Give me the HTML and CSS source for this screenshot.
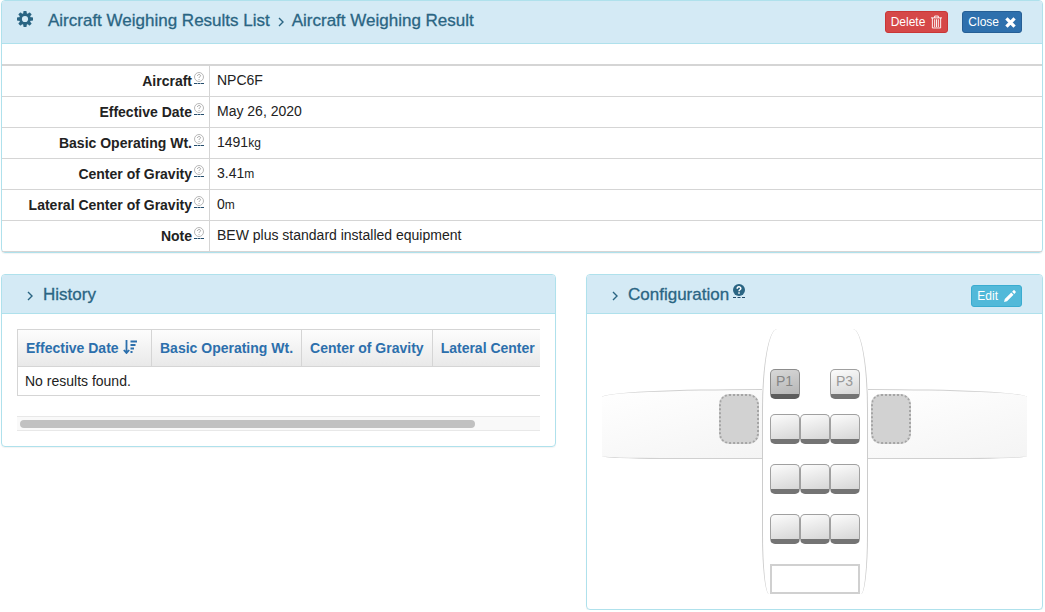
FILE: index.html
```
<!DOCTYPE html>
<html lang="en">
<head>
  <meta charset="UTF-8" />
  <meta name="viewport" content="width=device-width, initial-scale=1.0" />
  <title>Aircraft Weighing Result</title>
  <link rel="stylesheet" href="styles.css">
</head>
<body>
  <svg class="sprite" aria-hidden="true">
    <symbol id="help" viewBox="0 0 10 10">
      <circle cx="5" cy="5" r="4.5" fill="none" stroke="#b0b0b0" stroke-width="0.9" />
      <path d="M3.5 4c0-2 3-2 3-.2 0 1-1.5 1-1.5 2.1M5 7v.9" fill="none" stroke="#999" stroke-width="0.9" />
    </symbol>
    <symbol id="angle" viewBox="0 0 6 10">
      <path d="M1 1l4 4-4 4" fill="none" stroke="currentColor" stroke-width="1.4" />
    </symbol>
  </svg>

  <section class="panel">
    <header class="panel-heading">
      <svg class="gear" viewBox="0 0 16 16">
        <g fill="currentColor">
          <rect x="6.3" y="0" width="3.4" height="16" rx="0.8" />
          <rect x="6.3" y="0" width="3.4" height="16" rx="0.8" transform="rotate(45 8 8)" />
          <rect x="6.3" y="0" width="3.4" height="16" rx="0.8" transform="rotate(90 8 8)" />
          <rect x="6.3" y="0" width="3.4" height="16" rx="0.8" transform="rotate(135 8 8)" />
          <circle cx="8" cy="8" r="5.9" />
        </g>
        <circle cx="8" cy="8" r="3.1" fill="#d4eaf5" />
      </svg>
      <h1 class="title breadcrumb">
        <a href="#">Aircraft Weighing Results List</a>
        <svg class="angle"><use href="#angle" /></svg>
        <span>Aircraft Weighing Result</span>
      </h1>
      <div class="actions">
        <button type="button" class="btn btn-danger">Delete
          <svg class="icon-trash" viewBox="0 0 12 14" fill="none" stroke="currentColor">
            <path d="M0 2.5h12M4 2.5V.5h4v2M1.5 2.5v11h9v-11M4 4v8.500M6 4v8.500M8 4v8.500" />
          </svg>
        </button>
        <button type="button" class="btn btn-primary">Close
          <svg class="icon-x" viewBox="0 0 10 10">
            <path d="M1.300 1.300l7.400 7.400M8.700 1.300L1.300 8.700" stroke="currentColor" stroke-width="3" />
          </svg>
        </button>
      </div>
    </header>
    <table class="details">
      <tr>
        <th scope="row">Aircraft<span class="help"><svg><use href="#help" /></svg></span></th>
        <td>NPC6F</td>
      </tr>
      <tr>
        <th scope="row">Effective Date<span class="help"><svg><use href="#help" /></svg></span></th>
        <td>May 26, 2020</td>
      </tr>
      <tr>
        <th scope="row">Basic Operating Wt.<span class="help"><svg><use href="#help" /></svg></span></th>
        <td>1491<small>kg</small></td>
      </tr>
      <tr>
        <th scope="row">Center of Gravity<span class="help"><svg><use href="#help" /></svg></span></th>
        <td>3.41<small>m</small></td>
      </tr>
      <tr>
        <th scope="row">Lateral Center of Gravity<span class="help"><svg><use href="#help" /></svg></span></th>
        <td>0<small>m</small></td>
      </tr>
      <tr>
        <th scope="row">Note<span class="help"><svg><use href="#help" /></svg></span></th>
        <td>BEW plus standard installed equipment</td>
      </tr>
    </table>
  </section>

  <div class="columns">
    <section class="panel">
      <header class="panel-heading compact">
        <svg class="angle"><use href="#angle" /></svg>
        <h2 class="title">History</h2>
      </header>
      <div class="panel-body">
        <div class="table-scroll">
          <table class="history">
            <thead>
              <tr>
                <th class="sorted"><a href="#">Effective Date
                  <svg class="sort" viewBox="0 0 15 14">
                    <path d="M3.500 0v12M.8 10l2.700 3 2.700-3" fill="none" stroke="currentColor" stroke-width="1.800" />
                    <path d="M7.500 1.500H14M7.500 5h5M7.500 8.500h3.500M7.500 12h2" stroke="currentColor" stroke-width="2" />
                  </svg></a></th>
                <th><a href="#">Basic Operating Wt.</a></th>
                <th><a href="#">Center of Gravity</a></th>
                <th class="lateral"><a href="#">Lateral Center</a></th>
              </tr>
            </thead>
            <tbody>
              <tr><td colspan="4">No results found.</td></tr>
            </tbody>
          </table>
        </div>
        <div class="scroll-track"><div class="scroll-thumb"></div></div>
      </div>
    </section>

    <section class="panel">
      <header class="panel-heading compact">
        <svg class="angle"><use href="#angle" /></svg>
        <h2 class="title">Configuration<span class="help help-solid">
          <svg viewBox="0 0 12 12">
            <circle cx="6" cy="6" r="6" fill="currentColor" />
            <path d="M4.200 4.700c0-2.500 3.600-2.400 3.600-.2C7.800 5.800 6 5.700 6 7.200M6 8.200v1.500" fill="none" stroke="#fff" stroke-width="1.500" />
          </svg></span></h2>
        <div class="actions">
          <button type="button" class="btn btn-info">Edit
            <svg class="icon-pencil" viewBox="0 0 12 12" fill="currentColor">
              <path d="M0 12l.8-3 6.500-6.500 2.200 2.200L3 11.200zM8.100 1.700L9.400.4c.4-.4.8-.4 1.200 0l1 1c.4.4.4.8 0 1.200l-1.300 1.300z" />
            </svg>
          </button>
        </div>
      </header>
      <div class="panel-body">
        <div class="plane">
          <div class="wing wing-left"><div class="tank"></div></div>
          <div class="fuselage">
            <div class="seat-row cockpit">
              <div class="seat pilot">P1</div>
              <div class="seat">P3</div>
            </div>
            <div class="seat-row"><div class="seat"></div><div class="seat"></div><div class="seat"></div></div>
            <div class="seat-row"><div class="seat"></div><div class="seat"></div><div class="seat"></div></div>
            <div class="seat-row"><div class="seat"></div><div class="seat"></div><div class="seat"></div></div>
            <div class="baggage"></div>
          </div>
          <div class="wing wing-right"><div class="tank"></div></div>
        </div>
      </div>
    </section>
  </div>
</body>
</html>
```
FILE: styles.css
```
* {
  box-sizing: border-box;
}

body {
  margin: 0;
  padding: 0 2px 0 1px;
  font-family: "Liberation Sans", Arial, sans-serif;
  font-size: 14px;
  line-height: 20px;
  color: #222;
  background: #fff;
}

a {
  color: inherit;
  text-decoration: none;
}

.sprite {
  display: none;
}

/* panels */
.panel {
  border: 1px solid #afe1ec;
  border-radius: 4px;
  box-shadow: 0 1px 1px rgba(0, 0, 0, 0.05);
}

.panel-heading {
  display: flex;
  align-items: flex-start;
  padding: 10px 20px 10px 15px;
  color: #2a6583;
  background: #d4eaf5;
  border-bottom: 1px solid #afe1ec;
  border-radius: 3px 3px 0 0;
}

.panel-heading.compact {
  min-height: 39px;
  padding: 10px 20px 6px 25px;
}

.panel-body {
  padding: 15px;
}

.title {
  margin: 0;
  font-size: 17px;
  font-weight: normal;
  line-height: 20px;
  -webkit-text-stroke: 0.3px currentColor;
}

.breadcrumb {
  display: flex;
}

.gear {
  width: 16px;
  height: 16px;
  margin-right: 15px;
}

.angle {
  width: 6px;
  height: 10px;
  margin: 6px 10px 0 0;
}

.breadcrumb .angle {
  margin: 6px 8px 0;
}

.actions {
  display: flex;
  gap: 14px;
  margin-left: auto;
}

.btn {
  display: flex;
  align-items: center;
  gap: 6px;
  height: 22px;
  padding: 0 5px;
  font: 12px "Liberation Sans", Arial, sans-serif;
  color: #fff;
  border: 1px solid;
  border-radius: 3px;
  cursor: pointer;
}

.btn-danger {
  background: #d54848;
  border-color: #c93636;
}

.btn-primary {
  background: #2e70ad;
  border-color: #265f95;
}

.btn-info {
  background: #52b9d9;
  border-color: #3aacd0;
}

.icon-trash {
  width: 11px;
  height: 14px;
}

.icon-x {
  width: 11px;
  height: 11px;
}

.icon-pencil {
  width: 12px;
  height: 12px;
}

/* result details */
.details {
  width: 100%;
  margin-top: 20px;
  border-collapse: separate;
  border-spacing: 0;
  border-top: 2px solid #d5d5d5;
}

.details th,
.details td {
  height: 31px;
  padding: 4px 7px 6px;
  text-align: left;
  border-bottom: 1px solid #d5d5d5;
}

.details th {
  width: 208px;
  padding: 5px 5px 5px 0;
  text-align: right;
  white-space: nowrap;
  border-right: 1px solid #d5d5d5;
}

.details small {
  font-size: 12px;
  line-height: 1;
}

.help {
  display: inline-block;
  width: 10px;
  height: 12px;
  margin: -4px 0 0 2px;
  line-height: 0;
  vertical-align: 2px;
  border-bottom: 1px dashed #234c6c;
}

.help svg {
  display: block;
  width: 10px;
  height: 10px;
}

.help-solid {
  width: 12px;
  height: 14px;
  margin-left: 4px;
}

.help-solid svg {
  width: 12px;
  height: 12px;
}

/* lower row */
.columns {
  display: grid;
  grid-template-columns: 555fr 457fr;
  align-items: start;
  gap: 30px;
  margin-top: 21px;
}

.columns .panel {
  min-width: 0;
}

.table-scroll {
  overflow: hidden;
}

.history {
  border-collapse: separate;
  border-spacing: 0;
  border-left: 1px solid #d5d5d5;
  white-space: nowrap;
}

.history th {
  height: 38px;
  padding: 0 8px;
  color: #2c6fac;
  text-align: left;
  background: linear-gradient(#fdfdfd, #e9e9e9);
  border: solid #d5d5d5;
  border-width: 1px 1px 1px 0;
}

.history .sorted {
  min-width: 134px;
}

.history .lateral {
  min-width: 180px;
}

.history td {
  height: 29px;
  padding: 0 7px;
  border-bottom: 1px solid #d5d5d5;
}

.sort {
  width: 15px;
  height: 14px;
  margin-left: 1px;
  vertical-align: -1px;
}

.scroll-track {
  height: 15px;
  margin-top: 20px;
  padding: 3px;
  background: #f9f9f9;
  border: solid #e8e8e8;
  border-width: 1px 0;
}

.scroll-thumb {
  width: 88%;
  height: 8px;
  background: #c1c1c1;
  border-radius: 4px;
}

/* seat map */
.plane {
  display: grid;
  grid-template-columns: 1fr 106px 1fr;
}

.wing {
  display: flex;
  height: 70px;
  margin-top: 60px;
  padding: 4px 3px;
  background: linear-gradient(165deg, #fff, #f4f4f4);
  border: solid #d0d0d0;
  border-width: 1px 0;
}

.wing-left {
  justify-content: flex-end;
  border-radius: 100% 0 0 60px / 8px 0 0 3px;
}

.wing-right {
  border-radius: 0 100% 60px 0 / 0 8px 3px 0;
}

.tank {
  width: 40px;
  height: 50px;
  background: #d2d2d2;
  border: 2px dotted #a5a5a5;
  border-radius: 10px;
}

.fuselage {
  display: flex;
  flex-direction: column;
  gap: 20px;
  padding: 40px 7px 0;
  border: solid #ccc;
  border-width: 0 1px;
  border-radius: 15px 15px 7px 7px / 80px 80px 60px 60px;
}

.seat-row {
  display: flex;
}

.cockpit {
  justify-content: space-between;
  margin-bottom: -5px;
}

.seat {
  width: 30px;
  height: 30px;
  color: #999;
  line-height: 22px;
  text-align: center;
  background: linear-gradient(165deg, #fcfcfc, #d6d6d6);
  border: 1px solid #a0a0a0;
  border-bottom: 5px solid #747474;
  border-radius: 5px;
}

.pilot {
  color: #858585;
  background: linear-gradient(165deg, #d8d8d8, #b6b6b6);
  border-color: #8c8c8c #8c8c8c #5c5c5c;
}

.baggage {
  height: 30px;
  border: 2px solid #d0d0d0;
}
```
